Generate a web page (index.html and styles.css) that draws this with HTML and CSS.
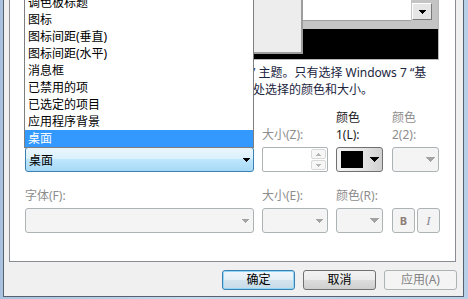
FILE: index.html
```html
<!DOCTYPE html>
<html>
<head>
    <meta charset="utf-8">
    <link rel="stylesheet" href="styles.css">
</head>
<body>
<div class="frame">
<div class="client">
    <div class="tabpage">
        <div class="preview">
            <div class="pv-win pv-back">
                <div class="pv-field"></div>
                <div class="pv-drop">
                    <svg width="7" height="4"><path d="M0 0h7v1h-1v1h-1v1h-1v1h-1v-1h-1v-1h-1v-1h-1z"/></svg>
                </div>
            </div>
            <div class="pv-win pv-front"></div>
        </div>

        <!-- left part of the note is hidden by the open list -->
        <p class="note">
            <span class="first">” 主题。只有选择 Windows 7 “基</span>
            <span>处选择的颜色和大小。</span>
        </p>

        <div class="fields">
            <span></span>
            <label class="lbl off">大小(Z):</label>
            <label class="lbl">颜色<br>1(L):</label>
            <label class="lbl off">颜色<br>2(2):</label>

            <div class="combo hot">
                <ul class="droplist">
                    <li>调色板标题</li>
                    <li>图标</li>
                    <li>图标间距(垂直)</li>
                    <li>图标间距(水平)</li>
                    <li>消息框</li>
                    <li>已禁用的项</li>
                    <li>已选定的项目</li>
                    <li>应用程序背景</li>
                    <li class="sel">桌面</li>
                </ul>
                <span>桌面</span>
                <svg class="arr" width="7" height="4"><path d="M0 0h7v1h-1v1h-1v1h-1v1h-1v-1h-1v-1h-1v-1h-1z"/></svg>
            </div>
            <div class="spin">
                <div class="spin-btns">
                    <div class="sb"><svg width="5" height="3"><path d="M2 0h1v1h1v1h1v1h-5v-1h1v-1h1z"/></svg></div>
                    <div class="sb"><svg width="5" height="3"><path d="M0 0h5v1h-1v1h-1v1h-1v-1h-1v-1h-1z"/></svg></div>
                </div>
            </div>
            <div class="colorbtn">
                <span class="swatch"></span>
                <svg class="arr" width="9" height="5"><path d="M0 0h9v1h-1v1h-1v1h-1v1h-1v1h-1v-1h-1v-1h-1v-1h-1v-1h-1z"/></svg>
            </div>
            <div class="colorbtn off">
                <svg class="arr" width="9" height="5"><path d="M0 0h9v1h-1v1h-1v1h-1v1h-1v1h-1v-1h-1v-1h-1v-1h-1v-1h-1z"/></svg>
            </div>

            <label class="lbl off row2">字体(F):</label>
            <label class="lbl off row2">大小(E):</label>
            <label class="lbl off row2">颜色(R):</label>
            <span></span>

            <div class="combo off">
                <span></span>
                <svg class="arr" width="7" height="4"><path d="M0 0h7v1h-1v1h-1v1h-1v1h-1v-1h-1v-1h-1v-1h-1z"/></svg>
            </div>
            <div class="combo off">
                <span></span>
                <svg class="arr" width="7" height="4"><path d="M0 0h7v1h-1v1h-1v1h-1v1h-1v-1h-1v-1h-1v-1h-1z"/></svg>
            </div>
            <div class="colorbtn off">
                <svg class="arr" width="9" height="5"><path d="M0 0h9v1h-1v1h-1v1h-1v1h-1v1h-1v-1h-1v-1h-1v-1h-1v-1h-1z"/></svg>
            </div>
            <div class="styles">
                <div class="tbtn bold">B</div>
                <div class="tbtn ital">I</div>
            </div>
        </div>
    </div>

    <div class="buttons">
        <div class="button default">确定</div>
        <div class="button">取消</div>
        <div class="button off">应用(A)</div>
    </div>
</div>
</div>
</body>
</html>
```

FILE: styles.css
```css
* {
    box-sizing: border-box;
}

body {
    margin: 0;
    width: 468px;
    height: 299px;
    overflow: hidden;
    font-family: "Noto Sans", "Noto Sans CJK SC", sans-serif;
    font-size: 12px;
    color: #1b1b1b;
}

.frame {
    height: 299px;
    padding: 0 4px 2px 3px;
    background: linear-gradient(90deg, #a9c2de, #c6d9ee 40%, #b8cfe8);
}

.client {
    height: 100%;
    background-color: #f0f0f0;
    border: 1px solid #56626f;
    border-top: none;
}

.tabpage {
    position: relative;
    height: 262px;
    margin: 0 7px 0 5px;
    padding: 0 15px;
    background-color: #fff;
    border: 1px solid #898c95;
    border-top: none;
}

/* preview of the desktop */
.preview {
    position: relative;
    width: 414px;
    height: 60px;
    background-color: #000;
    border-right: 1px solid #b9b9b9;
    border-bottom: 1px solid #b9b9b9;
}

.pv-win {
    position: absolute;
    top: 0;
}

.pv-front {
    left: 0;
    width: 278px;
    height: 54px;
    background-color: #ededed;
    border-right: 2px solid #9d9d9d;
    border-bottom: 2px solid #9d9d9d;
}

.pv-back {
    left: 278px;
    width: 135px;
    height: 29px;
    display: flex;
    align-items: flex-start;
    background-color: #c4c4c4;
}

.pv-field {
    width: 108px;
    height: 21px;
    background-color: #fff;
    border-bottom: 1px solid #a0a0a0;
}

.pv-drop {
    width: 20px;
    height: 17px;
    margin: 3px 0 0 1px;
    display: flex;
    align-items: center;
    justify-content: center;
    background-color: #e6e6e6;
    border: 1px solid;
    border-color: #fff #7a7a7a #7a7a7a #fff;
}

.note {
    margin: 4px 0 11px 228px;
    line-height: 17px;
    white-space: nowrap;
    color: #1b2540;
}

.note span {
    display: block;
}

.note .first {
    margin-left: -2px;
}

/* labels and controls */
.fields {
    display: grid;
    grid-template-columns: 229px 66px 48px 47px;
    column-gap: 8px;
}

.lbl {
    align-self: end;
    margin-bottom: 4px;
    line-height: 17px;
    white-space: nowrap;
}

.lbl.row2 {
    margin-top: 15px;
}

.off {
    color: #8d8d8d;
}

svg path {
    fill: #000;
}

.off svg path {
    fill: #a3a3a3;
}

.combo {
    position: relative;
    height: 25px;
    display: flex;
    align-items: center;
    justify-content: space-between;
    padding: 0 3px 0 3px;
    border: 1px solid #adb2b5;
    border-radius: 3px;
    background-color: #f4f4f4;
}

.combo.off {
    padding-right: 4px;
}

.combo.hot {
    border-color: #3c7fb1;
    background: linear-gradient(#eaf6fd 0%, #d9f0fc 50%, #bee6fd 50%, #a7d9f5 100%);
    color: #000;
}

.droplist {
    position: absolute;
    left: -2px;
    bottom: 100%;
    width: 230px;
    margin: 0;
    padding: 0;
    list-style: none;
    background-color: #fff;
    border: 1px solid #7f7f7f;
    z-index: 5;
    color: #000;
}

.droplist li {
    height: 17px;
    line-height: 17px;
    padding-left: 3px;
}

.droplist .sel {
    background-color: #3399ff;
    color: #fff;
}

.spin {
    height: 25px;
    display: flex;
    justify-content: flex-end;
    align-items: center;
    padding-right: 1px;
    border: 1px solid #adb2b5;
    border-radius: 2px;
    background-color: #fff;
}

.spin-btns {
    width: 15px;
    display: flex;
    flex-direction: column;
    gap: 1px;
}

.sb {
    height: 10px;
    display: flex;
    align-items: center;
    justify-content: center;
    border: 1px solid #d9d9d9;
    border-radius: 2px;
    background-color: #f7f7f7;
}

.sb svg path {
    fill: #b4b4b4;
}

.colorbtn {
    width: 47px;
    height: 25px;
    display: flex;
    align-items: center;
    justify-content: flex-end;
    gap: 4px;
    padding: 0 3px 0 4px;
    border: 1px solid #707070;
    border-radius: 3px;
    background: linear-gradient(90deg, #f4f4f4, #e4e4e4 60%, #d0d0d0);
}

.colorbtn.off {
    border-color: #adb2b5;
    background: #f4f4f4;
}

.swatch {
    width: 22px;
    height: 17px;
    margin-right: auto;
    background-color: #000;
}

.styles {
    display: flex;
    gap: 2px;
}

.tbtn {
    width: 23px;
    height: 25px;
    line-height: 23px;
    text-align: center;
    color: #8a8a8a;
    border: 1px solid #adb2b5;
    border-radius: 3px;
    background-color: #f4f4f4;
    flex-shrink: 0;
}

.bold {
    font-weight: bold;
    font-size: 11px;
    color: #8c7d78;
}

.ital {
    font-family: "Liberation Serif", serif;
    font-style: italic;
    font-size: 13px;
    color: #8a8797;
}

/* dialog buttons */
.buttons {
    display: flex;
    justify-content: flex-end;
    gap: 8px;
    margin-top: 8px;
    padding-right: 6px;
}

.button {
    width: 73px;
    height: 20px;
    line-height: 18px;
    text-align: center;
    color: #000;
    border: 1px solid #707070;
    border-radius: 3px;
    background: linear-gradient(#f2f2f2 0%, #ebebeb 50%, #dddddd 50%, #cfcfcf 100%);
}

.button.default {
    border-color: #3c7fb1;
    box-shadow: inset 0 0 0 1px #8fd8f8;
    background: linear-gradient(#f0f7fb 0%, #e3eff6 50%, #d3e4ee 50%, #c6dbe8 100%);
}

.button.off {
    color: #838383;
    border-color: #adb2b5;
    background: #f4f4f4;
}
```
